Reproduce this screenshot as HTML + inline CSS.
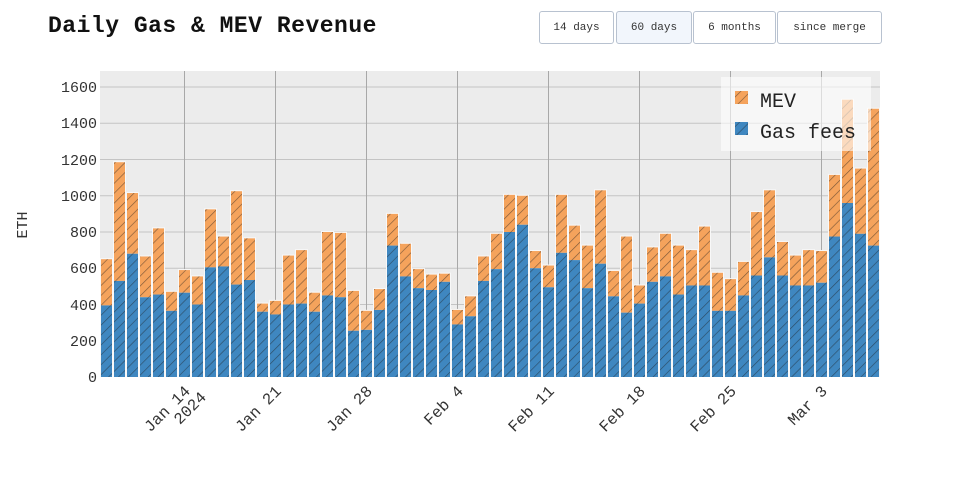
<!DOCTYPE html>
<html><head><meta charset="utf-8"><style>
body{margin:0;background:#fff;width:960px;height:500px;overflow:hidden;font-family:"Liberation Mono",monospace}
h1{position:absolute;left:48px;top:13px;margin:0;font-size:23px;font-weight:bold;color:#111;font-family:"Liberation Mono",monospace;letter-spacing:0.5px}
.b{position:absolute;top:11px;height:33px;border:1px solid #b8c2d0;border-radius:3px;background:#fff;font-size:11px;color:#333;display:flex;align-items:center;justify-content:center;box-sizing:border-box}
</style></head><body>
<h1>Daily Gas &amp; MEV Revenue</h1>
<div class="b" style="left:539px;width:75px">14 days</div>
<div class="b" style="left:616px;width:76px;background:#f2f6fc">60 days</div>
<div class="b" style="left:693px;width:83px">6 months</div>
<div class="b" style="left:777px;width:105px">since merge</div>
<svg id="s" width="960" height="500" style="position:absolute;left:0;top:0" font-family="Liberation Mono, monospace">
<defs>
<pattern id="h" width="7" height="7" patternUnits="userSpaceOnUse" patternTransform="rotate(45)">
<line x1="0" y1="0" x2="0" y2="7" stroke="rgba(30,30,30,0.55)" stroke-width="1.3"/>
</pattern>
</defs>
<rect x="100" y="71" width="780" height="306" fill="#ececec"/>
<g stroke="#c4c4c4" stroke-width="1">
<line x1="100" x2="880" y1="340.75" y2="340.75"/><line x1="100" x2="880" y1="304.5" y2="304.5"/>
<line x1="100" x2="880" y1="268.25" y2="268.25"/><line x1="100" x2="880" y1="232" y2="232"/>
<line x1="100" x2="880" y1="195.75" y2="195.75"/><line x1="100" x2="880" y1="159.5" y2="159.5"/>
<line x1="100" x2="880" y1="123.25" y2="123.25"/><line x1="100" x2="880" y1="87" y2="87"/>
</g>
<g stroke="#a8a8a8" stroke-width="1">
<line x1="184.5" x2="184.5" y1="71" y2="377"/><line x1="275.5" x2="275.5" y1="71" y2="377"/>
<line x1="366.5" x2="366.5" y1="71" y2="377"/><line x1="457.5" x2="457.5" y1="71" y2="377"/>
<line x1="548.5" x2="548.5" y1="71" y2="377"/><line x1="639.5" x2="639.5" y1="71" y2="377"/>
<line x1="730.5" x2="730.5" y1="71" y2="377"/><line x1="821.5" x2="821.5" y1="71" y2="377"/>
</g>
<g id="bars"></g>
<rect x="721" y="77" width="150" height="74" fill="rgba(255,255,255,0.6)"/>
<rect x="735" y="91" width="13" height="13" fill="#f5a35c"/><rect x="735" y="91" width="13" height="13" fill="url(#h)"/>
<rect x="735" y="122" width="13" height="13" fill="#3f87c0"/><rect x="735" y="122" width="13" height="13" fill="url(#h)"/>
<text x="760" y="107" font-size="20" fill="#222">MEV</text>
<text x="760" y="138" font-size="20" fill="#222">Gas fees</text>
<g font-size="15" fill="#333" text-anchor="end">
<text x="97" y="382">0</text><text x="97" y="346">200</text><text x="97" y="310">400</text>
<text x="97" y="273">600</text><text x="97" y="237">800</text><text x="97" y="201">1000</text>
<text x="97" y="165">1200</text><text x="97" y="128">1400</text><text x="97" y="92">1600</text>
</g>
<text transform="translate(27,225) rotate(-90)" font-size="15" fill="#333" text-anchor="middle">ETH</text>
<g font-size="16" fill="#333" text-anchor="end">
<text transform="translate(191,392) rotate(-45)">Jan 14</text>
<text transform="translate(207,398) rotate(-45)">2024</text>
<text transform="translate(282,392) rotate(-45)">Jan 21</text>
<text transform="translate(373,392) rotate(-45)">Jan 28</text>
<text transform="translate(464,392) rotate(-45)">Feb 4</text>
<text transform="translate(555,392) rotate(-45)">Feb 11</text>
<text transform="translate(646,392) rotate(-45)">Feb 18</text>
<text transform="translate(737,392) rotate(-45)">Feb 25</text>
<text transform="translate(828,392) rotate(-45)">Mar 3</text>
</g>
</svg>
<script>
var d=[[395,650],[530,1185],[680,1015],[440,665],[455,820],[365,470],[465,590],[400,555],[605,925],[610,775],[510,1025],[535,765],[360,405],[345,420],[400,670],[405,700],[360,465],[450,800],[440,795],[255,475],[260,365],[370,485],[725,900],[555,735],[490,595],[480,565],[525,570],[290,370],[335,445],[530,665],[595,790],[800,1005],[840,1000],[600,695],[495,615],[685,1005],[645,835],[490,725],[625,1030],[445,585],[355,775],[405,505],[525,715],[555,790],[455,725],[505,700],[505,830],[365,575],[365,540],[450,635],[560,910],[660,1030],[560,745],[505,670],[505,700],[520,695],[775,1115],[960,1530],[790,1150],[725,1480]];
var s='',k=0.18125;
d.forEach(function(v,i){var x=101+i*13,w=11,g=v[0]*k,t=v[1]*k;
s+='<rect x="'+(x-1)+'" y="'+(377-t-1)+'" width="'+(w+2)+'" height="'+(t+1)+'" fill="#f8f8f8"/>';
s+='<rect x="'+x+'" y="'+(377-t)+'" width="'+w+'" height="'+(t-g)+'" fill="#f5a35c"/>';
s+='<rect x="'+x+'" y="'+(377-t)+'" width="'+w+'" height="'+(t-g)+'" fill="url(#h)"/>';
s+='<rect x="'+x+'" y="'+(377-g)+'" width="'+w+'" height="'+g+'" fill="#3f87c0"/>';
s+='<rect x="'+x+'" y="'+(377-g)+'" width="'+w+'" height="'+g+'" fill="url(#h)"/>';});
document.getElementById('bars').innerHTML=s;
</script>
</body></html>
